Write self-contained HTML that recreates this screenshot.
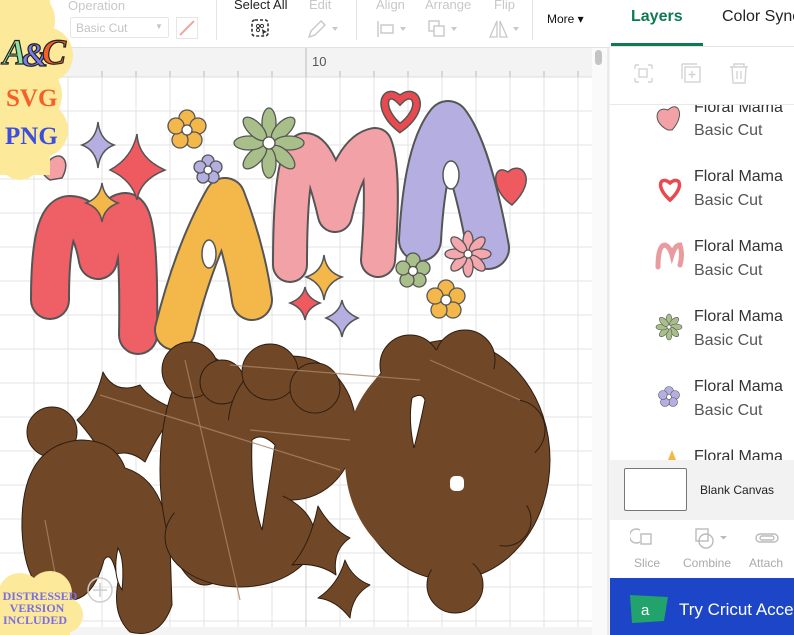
<!DOCTYPE html>
<html><head><meta charset="utf-8"><style>
*{margin:0;padding:0;box-sizing:border-box}
body{width:794px;height:635px;overflow:hidden;background:#fff;font-family:"Liberation Sans",sans-serif;position:relative}
.t{position:absolute;white-space:nowrap}
</style></head><body>
<!-- toolbar -->
<div style="position:absolute;left:0;top:0;width:610px;height:48px;background:#fff;border-bottom:1px solid #e2e2e2"></div>
<div class="t" style="left:68px;top:-2px;font-size:13px;color:#c8c8c8">Operation</div>
<div style="position:absolute;left:70px;top:17px;width:99px;height:21px;border:1px solid #e6e6e6;border-radius:2px"></div>
<div class="t" style="left:76px;top:21px;font-size:12px;color:#c4c4c4">Basic Cut</div>
<div class="t" style="left:155px;top:22px;font-size:8px;color:#c4c4c4">▼</div>
<div style="position:absolute;left:176px;top:17px;width:22px;height:22px;border:1px solid #e6e6e6"></div>
<svg style="position:absolute;left:176px;top:17px" width="22" height="22"><line x1="4" y1="18" x2="18" y2="4" stroke="#f0a9a0" stroke-width="2"/></svg>
<div style="position:absolute;left:216px;top:0;width:1px;height:40px;background:#e4e4e4"></div>
<div class="t" style="left:234px;top:-3px;font-size:13px;color:#222">Select All</div>
<svg style="position:absolute;left:250px;top:18px" width="22" height="22"><rect x="2" y="2" width="16" height="16" rx="3" fill="none" stroke="#333" stroke-width="1.6" stroke-dasharray="3 2"/><circle cx="8" cy="8" r="1.6" fill="none" stroke="#333"/><circle cx="12" cy="8" r="1.6" fill="none" stroke="#333"/><circle cx="8" cy="12" r="1.6" fill="none" stroke="#333"/><path d="M12 11 L17 14 L14 15 L13 18Z" fill="#333"/></svg>
<div class="t" style="left:309px;top:-3px;font-size:13px;color:#c8c8c8">Edit</div>
<svg style="position:absolute;left:306px;top:18px" width="36" height="22"><path d="M3 19 L5 13 L15 3 L19 7 L9 17Z" fill="none" stroke="#c8c8c8" stroke-width="1.4"/><path d="M26 9 L32 9 L29 13Z" fill="#c8c8c8"/></svg>
<div style="position:absolute;left:356px;top:0;width:1px;height:40px;background:#e4e4e4"></div>
<div class="t" style="left:376px;top:-3px;font-size:13px;color:#c8c8c8">Align</div>
<svg style="position:absolute;left:376px;top:18px" width="36" height="22"><line x1="2" y1="3" x2="2" y2="19" stroke="#c8c8c8" stroke-width="1.4"/><rect x="5" y="7" width="12" height="8" fill="none" stroke="#c8c8c8" stroke-width="1.4"/><path d="M24 9 L30 9 L27 13Z" fill="#c8c8c8"/></svg>
<div class="t" style="left:425px;top:-3px;font-size:13px;color:#c8c8c8">Arrange</div>
<svg style="position:absolute;left:427px;top:18px" width="36" height="22"><rect x="2" y="3" width="10" height="10" fill="none" stroke="#c8c8c8" stroke-width="1.4"/><rect x="7" y="8" width="10" height="10" fill="#fff" stroke="#c8c8c8" stroke-width="1.4"/><path d="M24 9 L30 9 L27 13Z" fill="#c8c8c8"/></svg>
<div class="t" style="left:494px;top:-3px;font-size:13px;color:#c8c8c8">Flip</div>
<svg style="position:absolute;left:488px;top:18px" width="36" height="22"><path d="M9 3 L2 19 L9 19Z M12 3 L19 19 L12 19Z" fill="none" stroke="#c8c8c8" stroke-width="1.3"/><path d="M25 9 L31 9 L28 13Z" fill="#c8c8c8"/></svg>
<div style="position:absolute;left:532px;top:0;width:1px;height:40px;background:#e4e4e4"></div>
<div class="t" style="left:547px;top:12px;font-size:12px;color:#111">More ▾</div>

<!-- canvas -->
<svg style="position:absolute;left:0;top:48px" width="610" height="587" viewBox="0 48 610 587">
<rect x="0" y="48" width="610" height="587" fill="#f4f4f4"/>
<rect x="0" y="77" width="592" height="550" fill="#fff"/>
<g stroke="#e3e3e3" stroke-width="1">
<path d="M34 77V627M68 77V627M102 77V627M136 77V627M170 77V627M204 77V627M238 77V627M272 77V627M340 77V627M374 77V627M408 77V627M442 77V627M476 77V627M510 77V627M544 77V627M578 77V627"/>
<path d="M0 111H592M0 145H592M0 179H592M0 213H592M0 247H592M0 281H592M0 315H592M0 349H592M0 383H592M0 417H592M0 451H592M0 485H592M0 519H592M0 553H592M0 587H592M0 621H592"/>
</g>
<line x1="306" y1="48" x2="306" y2="627" stroke="#d0d0d0"/>
<rect x="0" y="48" width="592" height="29" fill="#f3f3f3"/>
<line x1="0" y1="77" x2="592" y2="77" stroke="#ddd"/>
<g stroke="#bbb"><path d="M102 71V77M136 71V77M170 71V77M204 71V77M238 71V77M272 71V77M306 48V77M340 71V77M374 71V77M408 71V77M442 71V77M476 71V77M510 71V77M544 71V77M578 71V77"/></g>
<text x="312" y="66" font-size="13" fill="#555" font-family="Liberation Sans">10</text>
<rect x="592" y="48" width="16" height="587" fill="#fafafa"/>
<rect x="595" y="50" width="7" height="15" rx="3.5" fill="#c4c4c4"/>
<line x1="608" y1="0" x2="608" y2="635" stroke="#ddd"/>

<!-- MAMA letters -->
<g fill="none" stroke-linecap="round" stroke-linejoin="round">
<path d="M50 300 Q50 215 70 215 Q90 215 98 260 Q108 215 125 212 Q140 212 138 335" stroke="#555" stroke-width="40"/>
<path d="M50 300 Q50 215 70 215 Q90 215 98 260 Q108 215 125 212 Q140 212 138 335" stroke="#ee5f66" stroke-width="36"/>
<path d="M175 330 Q195 250 225 198 Q245 250 252 300" stroke="#555" stroke-width="42"/>
<path d="M175 330 Q195 250 225 198 Q245 250 252 300" stroke="#f4b84a" stroke-width="38"/>
<path d="M290 265 Q290 160 305 150 Q320 150 335 215 Q350 150 375 145 Q385 170 378 260" stroke="#555" stroke-width="36"/>
<path d="M290 265 Q290 160 305 150 Q320 150 335 215 Q350 150 375 145 Q385 170 378 260" stroke="#f2a2a6" stroke-width="32"/>
<path d="M420 240 Q425 150 448 122 Q470 150 488 248" stroke="#555" stroke-width="44"/>
<path d="M420 240 Q425 150 448 122 Q470 150 488 248" stroke="#b4afe0" stroke-width="40"/>
</g>
<ellipse cx="209" cy="254" rx="7" ry="14" fill="#fff" stroke="#555" stroke-width="1.5"/>
<ellipse cx="451" cy="175" rx="8" ry="14" fill="#fff" stroke="#555" stroke-width="1.5"/>
<!-- hearts -->
<path d="M400 128 C375 108 385 85 400 100 C415 85 428 108 400 128Z" fill="none" stroke="#555" stroke-width="9"/>
<path d="M400 128 C375 108 385 85 400 100 C415 85 428 108 400 128Z" fill="none" stroke="#e84a4f" stroke-width="6"/>
<path d="M512 205 C490 190 492 162 508 172 C520 160 540 178 512 205Z" fill="#ee5a60" stroke="#555" stroke-width="1.5"/>
<path d="M50 180 C35 170 38 155 50 160 C60 150 72 160 62 178Z" fill="#f4a0a4" stroke="#555" stroke-width="1.5"/>
<!-- stars -->
<g stroke="#555" stroke-width="1.5">
<path d="M98 122 Q100 140 114 145 Q100 150 98 168 Q96 150 82 145 Q96 140 98 122Z" fill="#b4afe0"/>
<path d="M137 134 Q138 158 165 170 Q140 180 137 200 Q132 180 110 170 Q132 158 137 134Z" fill="#ee5a60"/>
<path d="M102 183 Q104 198 118 203 Q104 208 102 222 Q100 208 86 203 Q100 198 102 183Z" fill="#f4b84a"/>
<path d="M324 255 Q326 272 342 277 Q326 283 324 300 Q322 283 306 277 Q322 272 324 255Z" fill="#f4b84a"/>
<path d="M305 287 Q307 298 320 303 Q307 308 305 320 Q303 308 290 303 Q303 298 305 287Z" fill="#ee5a60"/>
<path d="M342 300 Q344 312 358 318 Q344 324 342 337 Q340 324 326 318 Q340 312 342 300Z" fill="#b4afe0"/>
</g>
<!-- flowers -->
<g stroke="#555" stroke-width="1.3">
<g transform="translate(187,130)"><g fill="#f4b84a"><circle cx="0" cy="-12" r="8"/><circle cx="11" cy="-4" r="8"/><circle cx="7" cy="10" r="8"/><circle cx="-7" cy="10" r="8"/><circle cx="-11" cy="-4" r="8"/></g><circle r="5" fill="#fff"/></g>
<g transform="translate(208,170)"><g fill="#b4afe0"><circle cx="0" cy="-9" r="6"/><circle cx="8" cy="-3" r="6"/><circle cx="5" cy="7" r="6"/><circle cx="-5" cy="7" r="6"/><circle cx="-8" cy="-3" r="6"/></g><circle r="4" fill="#fff"/></g>
<g transform="translate(269,143)" fill="#a9bf8a"><ellipse cx="0" cy="-20" rx="7" ry="15"/><ellipse cx="0" cy="-20" rx="7" ry="15" transform="rotate(45)"/><ellipse cx="0" cy="-20" rx="7" ry="15" transform="rotate(90)"/><ellipse cx="0" cy="-20" rx="7" ry="15" transform="rotate(135)"/><ellipse cx="0" cy="-20" rx="7" ry="15" transform="rotate(180)"/><ellipse cx="0" cy="-20" rx="7" ry="15" transform="rotate(225)"/><ellipse cx="0" cy="-20" rx="7" ry="15" transform="rotate(270)"/><ellipse cx="0" cy="-20" rx="7" ry="15" transform="rotate(315)"/><circle r="6" fill="#fff"/></g>
<g transform="translate(468,254)" fill="#f4a8ae"><ellipse cx="0" cy="-13" rx="5" ry="10"/><ellipse cx="0" cy="-13" rx="5" ry="10" transform="rotate(45)"/><ellipse cx="0" cy="-13" rx="5" ry="10" transform="rotate(90)"/><ellipse cx="0" cy="-13" rx="5" ry="10" transform="rotate(135)"/><ellipse cx="0" cy="-13" rx="5" ry="10" transform="rotate(180)"/><ellipse cx="0" cy="-13" rx="5" ry="10" transform="rotate(225)"/><ellipse cx="0" cy="-13" rx="5" ry="10" transform="rotate(270)"/><ellipse cx="0" cy="-13" rx="5" ry="10" transform="rotate(315)"/><circle r="4" fill="#fff"/></g>
<g transform="translate(413,271)"><g fill="#a9bf8a"><circle cx="0" cy="-11" r="7"/><circle cx="10" cy="-3" r="7"/><circle cx="6" cy="9" r="7"/><circle cx="-6" cy="9" r="7"/><circle cx="-10" cy="-3" r="7"/></g><circle r="4.5" fill="#fff"/></g>
<g transform="translate(446,300)"><g fill="#f4b84a"><circle cx="0" cy="-12" r="8"/><circle cx="11" cy="-4" r="8"/><circle cx="7" cy="10" r="8"/><circle cx="-7" cy="10" r="8"/><circle cx="-11" cy="-4" r="8"/></g><circle r="5" fill="#fff"/></g>
</g>
<!-- brown word -->
<g fill="#714827" stroke="#2e1d10" stroke-width="1" stroke-linejoin="round">
<circle cx="52" cy="432" r="25"/>
<path d="M103 372 Q115 395 140 385 Q150 400 178 410 Q160 430 145 462 Q125 445 105 460 Q95 440 77 420 Q95 405 103 372Z"/>
<path d="M22 530 Q20 445 80 440 Q115 440 125 468 Q165 480 170 545 L172 605 Q160 640 130 632 Q112 615 118 582 Q112 548 104 560 Q92 605 62 600 Q25 595 22 530Z"/>
<ellipse cx="205" cy="470" rx="45" ry="115"/>
<circle cx="190" cy="370" r="28"/>
<circle cx="222" cy="382" r="22"/>
<ellipse cx="292" cy="428" rx="64" ry="72"/>
<circle cx="270" cy="372" r="28"/>
<circle cx="315" cy="388" r="25"/>
<ellipse cx="240" cy="537" rx="75" ry="50"/>
<path d="M318 506 Q330 528 350 538 Q332 550 336 575 Q318 562 292 565 Q310 545 318 506Z"/>
<path d="M345 560 Q352 578 370 585 Q352 595 350 618 Q336 600 318 598 Q338 585 345 560Z"/>
<ellipse cx="450" cy="460" rx="100" ry="120"/>
<circle cx="410" cy="365" r="30"/>
<circle cx="465" cy="360" r="30"/>
<circle cx="515" cy="430" r="30"/>
<circle cx="455" cy="585" r="28"/>
<circle cx="505" cy="520" r="26"/>
</g>
<ellipse cx="440" cy="460" rx="95" ry="110" fill="#714827"/>
<ellipse cx="225" cy="480" rx="60" ry="60" fill="#714827"/>
<path d="M252 440 Q262 432 275 445 Q268 490 262 530 Q250 495 252 440Z" fill="#fff" stroke="#2e1d10"/>
<path d="M118 548 Q125 560 122 590 Q112 575 118 548Z" fill="#fff" stroke="#2e1d10"/>
<path d="M412 398 Q422 392 425 400 Q420 425 414 448 Q408 420 412 398Z" fill="#fff" stroke="#2e1d10"/>
<rect x="450" y="476" width="14" height="15" rx="5" fill="#fff"/>
<g stroke="#a98566" stroke-width="1.2" opacity="0.8"><path d="M100 395 L340 470M185 360 L240 600M230 365 L420 380M430 360 L520 400M45 520 L60 600M250 430 L350 440"/></g>
<!-- zoom controls -->
<circle cx="100" cy="590" r="12" fill="none" stroke="#ccc" stroke-width="1.5"/>
<path d="M93 590H107M100 583V597" stroke="#ccc" stroke-width="1.5"/>
</svg>

<!-- logo cloud -->
<svg style="position:absolute;left:0;top:0" width="80" height="190">
<g fill="#fde99a"><circle cx="25" cy="20" r="30"/><circle cx="45" cy="55" r="28"/><circle cx="30" cy="95" r="32"/><circle cx="40" cy="130" r="28"/><circle cx="20" cy="160" r="20"/><rect x="0" y="0" width="50" height="175"/></g>
<text x="3" y="64" font-family="Liberation Serif" font-style="italic" font-weight="bold" font-size="36" fill="#8fe0a3" stroke="#222" stroke-width="1.2">A</text>
<text x="22" y="66" font-family="Liberation Serif" font-style="italic" font-weight="bold" font-size="34" fill="#7a7ce8" stroke="#222" stroke-width="1.2">&amp;</text>
<text x="42" y="64" font-family="Liberation Serif" font-style="italic" font-weight="bold" font-size="36" fill="#f5602a" stroke="#222" stroke-width="1.2">C</text>
<text x="6" y="106" font-family="Liberation Serif" font-weight="bold" font-size="25" fill="#f5602a">SVG</text>
<text x="5" y="144" font-family="Liberation Serif" font-weight="bold" font-size="25" fill="#3c4ee0">PNG</text>
</svg>
<svg style="position:absolute;left:0;top:565" width="85" height="70">
<g fill="#fde99a"><circle cx="20" cy="30" r="22"/><circle cx="50" cy="28" r="22"/><circle cx="65" cy="50" r="18"/><rect x="0" y="25" width="70" height="45"/></g>
<text x="40" y="35" text-anchor="middle" font-family="Liberation Serif" font-weight="bold" font-size="12" fill="#7a6fe0">DISTRESSED</text>
<text x="37" y="47" text-anchor="middle" font-family="Liberation Serif" font-weight="bold" font-size="12" fill="#7a6fe0">VERSION</text>
<text x="35" y="59" text-anchor="middle" font-family="Liberation Serif" font-weight="bold" font-size="12" fill="#7a6fe0">INCLUDED</text>
</svg>

<!-- right panel -->
<div style="position:absolute;left:610px;top:0;width:184px;height:635px;background:#fff"></div>
<div class="t" style="left:631px;top:8px;font-size:16px;color:#0f7a52;font-weight:bold">Layers</div>
<div class="t" style="left:722px;top:8px;font-size:16px;color:#222">Color Sync</div>
<div style="position:absolute;left:611px;top:43px;width:92px;height:3px;background:#0f7a52"></div>
<div style="position:absolute;left:610px;top:46px;width:184px;height:1px;background:#e2e2e2"></div>
<svg style="position:absolute;left:630px;top:60px" width="130" height="30"><g fill="none" stroke="#d4d4d4" stroke-width="1.4"><path d="M5 5h4M5 5v4M22 5h-4M22 5v4M5 22h4M5 22v-4M22 22h-4M22 22v-4"/><rect x="9" y="9" width="8" height="8"/><rect x="55" y="7" width="15" height="15"/><path d="M52 4h15M52 4v15M62 11v7M58.5 14.5h7"/><path d="M100 7h18M104 7v-3h10v3M102 7l1 16h12l1-16M107 11v8M111 11v8"/></g></svg>
<div style="position:absolute;left:610px;top:104px;width:184px;height:1px;background:#e8e8e8"></div>
<div style="position:absolute;left:610px;top:105px;width:184px;height:355px;overflow:hidden">
<div class="t" style="left:84px;top:-6px;font-size:16px;color:#333">Floral Mama</div>
<div class="t" style="left:84px;top:17px;font-size:16px;color:#555">Basic Cut</div>
<div class="t" style="left:84px;top:63px;font-size:16px;color:#333">Floral Mama</div>
<div class="t" style="left:84px;top:87px;font-size:16px;color:#555">Basic Cut</div>
<div class="t" style="left:84px;top:133px;font-size:16px;color:#333">Floral Mama</div>
<div class="t" style="left:84px;top:157px;font-size:16px;color:#555">Basic Cut</div>
<div class="t" style="left:84px;top:203px;font-size:16px;color:#333">Floral Mama</div>
<div class="t" style="left:84px;top:227px;font-size:16px;color:#555">Basic Cut</div>
<div class="t" style="left:84px;top:273px;font-size:16px;color:#333">Floral Mama</div>
<div class="t" style="left:84px;top:297px;font-size:16px;color:#555">Basic Cut</div>
<div class="t" style="left:84px;top:343px;font-size:16px;color:#333">Floral Mama</div>
<svg style="position:absolute;left:40px;top:0" width="40" height="355">
<path d="M18 25 C2 18 5 0 18 5 C28 -5 36 10 22 25Z" fill="#f2a2a6" stroke="#555"/>
<path d="M20 95 C5 82 10 70 20 78 C30 70 35 82 20 95Z" fill="none" stroke="#e84a4f" stroke-width="3.5"/>
<path d="M8 162 Q8 140 15 140 Q20 142 22 150 Q25 140 30 140 Q33 150 30 160" fill="none" stroke="#e89ca0" stroke-width="5" stroke-linecap="round"/>
<g transform="translate(19,222)" fill="#a9bf8a" stroke="#555" stroke-width=".6"><ellipse cy="-7" rx="3" ry="6"/><ellipse cy="-7" rx="3" ry="6" transform="rotate(45)"/><ellipse cy="-7" rx="3" ry="6" transform="rotate(90)"/><ellipse cy="-7" rx="3" ry="6" transform="rotate(135)"/><ellipse cy="-7" rx="3" ry="6" transform="rotate(180)"/><ellipse cy="-7" rx="3" ry="6" transform="rotate(225)"/><ellipse cy="-7" rx="3" ry="6" transform="rotate(270)"/><ellipse cy="-7" rx="3" ry="6" transform="rotate(315)"/><circle r="2" fill="#fff"/></g>
<g transform="translate(19,292)" fill="#b4afe0" stroke="#555" stroke-width=".6"><circle cy="-6" r="4.5"/><circle cx="6" cy="-2" r="4.5"/><circle cx="4" cy="5" r="4.5"/><circle cx="-4" cy="5" r="4.5"/><circle cx="-6" cy="-2" r="4.5"/><circle r="2.5" fill="#fff"/></g>
<path d="M18 355 L22 345 L26 355Z" fill="#f4b84a"/>
</svg>
</div>
<div style="position:absolute;left:610px;top:460px;width:184px;height:60px;background:#f2f2f2"></div>
<div style="position:absolute;left:624px;top:468px;width:63px;height:43px;background:#fff;border:1px solid #777;border-radius:2px"></div>
<div class="t" style="left:700px;top:483px;font-size:12px;color:#222">Blank Canvas</div>
<svg style="position:absolute;left:630px;top:525px" width="160" height="28"><g fill="none" stroke="#bbb" stroke-width="1.4"><path d="M10 5a7 7 0 1 0 0 12"/><rect x="11" y="9" width="10" height="10"/><rect x="66" y="4" width="12" height="12"/><circle cx="76" cy="16" r="7"/><rect x="126" y="9" width="22" height="8" rx="4"/><rect x="130" y="11" width="14" height="4" rx="2"/></g><path d="M90 11h7l-3.5 3.5z" fill="#bbb"/></svg>
<div class="t" style="left:634px;top:556px;font-size:12px;color:#aaa">Slice</div>
<div class="t" style="left:683px;top:556px;font-size:12px;color:#aaa">Combine</div>
<div class="t" style="left:749px;top:556px;font-size:12px;color:#aaa">Attach</div>
<div style="position:absolute;left:610px;top:578px;width:184px;height:57px;background:#1c46c7"></div>
<svg style="position:absolute;left:628px;top:593px" width="45" height="32"><path d="M2 2 L40 4 L36 28 L4 30Z" fill="#21a36b"/><text x="13" y="22" font-size="15" fill="#fff" font-family="Liberation Sans">a</text></svg>
<div class="t" style="left:679px;top:600px;font-size:17px;color:#fff">Try Cricut Access</div>
</body></html>
